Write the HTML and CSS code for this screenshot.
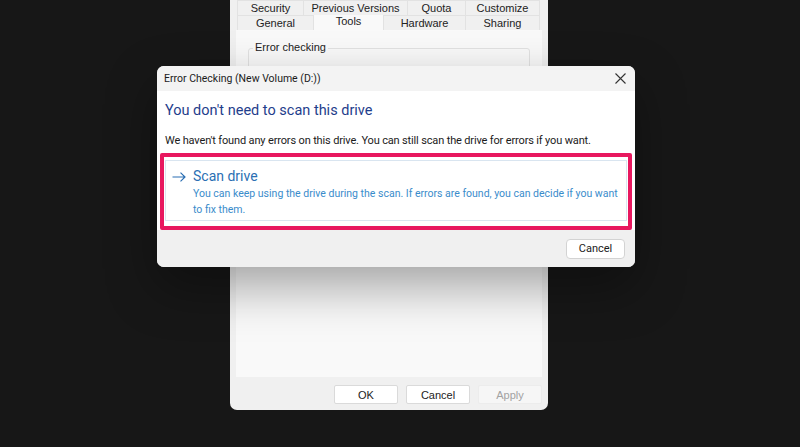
FILE: index.html
```html
<!DOCTYPE html>
<html lang="en">
<head>
    <meta charset="UTF-8">
    <meta name="viewport" content="width=device-width, initial-scale=1.0">
    <title>Error Checking</title>
    <link rel="stylesheet" href="styles.css">
</head>
<body>
    <div class="props">
        <div class="tab-row">
            <div class="tab" style="width: 66px">Security</div>
            <div class="tab" style="width: 104px">Previous Versions</div>
            <div class="tab" style="width: 58px">Quota</div>
            <div class="tab" style="width: 75px">Customize</div>
        </div>
        <div class="tab-row">
            <div class="tab" style="width: 76px">General</div>
            <div class="tab tab-active" style="width: 70px">Tools</div>
            <div class="tab" style="width: 82px">Hardware</div>
            <div class="tab" style="width: 75px">Sharing</div>
        </div>
        <div class="panel">
            <div class="group">
                <span class="group-label">Error checking</span>
            </div>
        </div>
        <div class="props-buttons">
            <button class="props-button">OK</button>
            <button class="props-button">Cancel</button>
            <button class="props-button props-button-disabled">Apply</button>
        </div>
    </div>

    <div class="dialog">
        <div class="dialog-title">
            <span>Error Checking (New Volume (D:))</span>
            <svg class="close" width="11" height="11" viewBox="0 0 11 11">
                <path d="M0.5 0.5 L10.5 10.5 M10.5 0.5 L0.5 10.5" stroke="#333" stroke-width="1.1" fill="none"/>
            </svg>
        </div>
        <div class="dialog-body">
            <h1>You don't need to scan this drive</h1>
            <p>We haven't found any errors on this drive. You can still scan the drive for errors if you want.</p>
            <div class="highlight">
                <div class="cmd-link">
                    <svg class="cmd-arrow" width="14" height="10" viewBox="0 0 14 10">
                        <path d="M0.5 5 H13 M8.5 0.6 L13 5 L8.5 9.4" stroke="#2b6fb3" stroke-width="1.2" fill="none"/>
                    </svg>
                    <div class="cmd-text">
                        <div class="cmd-title">Scan drive</div>
                        <div class="cmd-desc">You can keep using the drive during the scan. If errors are found, you can decide if you want to fix them.</div>
                    </div>
                </div>
            </div>
        </div>
        <div class="dialog-footer">
            <button class="dialog-button">Cancel</button>
        </div>
    </div>
</body>
</html>
```

FILE: styles.css
```css
html,
body {
    margin: 0;
    padding: 0;
    width: 800px;
    height: 447px;
    overflow: hidden;
    background: #171717;
}

body {
    font-family: "Liberation Sans", Arial, sans-serif;
    position: relative;
}

/* properties window behind */
.props {
    width: 306px;
    height: 410px;
    margin-left: 230px;
    padding: 0 6px;
    background: #f0f0f0;
    border-radius: 0 0 7px 7px;
    display: flex;
    flex-direction: column;
}

.tab-row {
    display: flex;
    margin-left: 1px;
    height: 15px;
}

.tab {
    box-sizing: border-box;
    font-size: 11px;
    color: #222222;
    text-align: center;
    line-height: 15px;
    border-left: 1px solid #e2e2e2;
    border-top: 1px solid #e2e2e2;
    background: #f0f0f0;
}

.tab:last-child {
    border-right: 1px solid #e2e2e2;
}

.tab-active {
    background: #f9f9f9;
    line-height: 12px;
    border-top: none;
}

.panel {
    height: 347px;
    background: #f9f9f9;
    box-sizing: border-box;
    padding: 18px 12px 0 12px;
}

.group {
    position: relative;
    height: 60px;
    border: 1px solid #e2e2e2;
    border-radius: 3px;
}

.group-label {
    position: absolute;
    top: -8px;
    left: 4px;
    padding: 0 2px;
    font-size: 11px;
    color: #222222;
    background: #f9f9f9;
}

.props-buttons {
    display: flex;
    justify-content: flex-end;
    gap: 8px;
    margin-top: 8px;
}

.props-button {
    width: 64px;
    height: 19px;
    padding: 0;
    font-family: "Liberation Sans", Arial, sans-serif;
    font-size: 11px;
    color: #222222;
    background: #ffffff;
    border: 1px solid #dadada;
    border-radius: 2px;
}

.props-button-disabled {
    background: #f6f6f6;
    color: #a2a2a2;
    border-color: #ececec;
}

/* error checking dialog on top */
.dialog {
    position: absolute;
    left: 157px;
    top: 66px;
    width: 478px;
    height: 201px;
    background: #ffffff;
    border-radius: 7px;
    overflow: hidden;
    font-family: Roboto, "Noto Sans", sans-serif;
    box-shadow: 0 20px 50px rgba(0, 0, 0, 0.35);
    display: flex;
    flex-direction: column;
}

.dialog-title {
    height: 25px;
    flex: none;
    background: #f3f3f3;
    display: flex;
    align-items: center;
    justify-content: space-between;
    padding: 0 9px 0 7px;
    font-size: 10.5px;
    color: #1b1b1b;
}

.close {
    display: block;
}

.dialog-body {
    padding: 0 3px 0 3px;
}

.dialog-body h1 {
    margin: 10px 0 0 5px;
    font-size: 14.5px;
    font-weight: 400;
    line-height: 20px;
    color: #1f3e8c;
}

.dialog-body p {
    margin: 12px 0 0 5px;
    font-size: 11px;
    letter-spacing: -0.15px;
    line-height: 15px;
    color: #1b1b1b;
}

.highlight {
    margin-top: 5px;
    border: 4px solid #e8185f;
    padding: 3px 1px 5px 1px;
    border-radius: 2px;
}

.cmd-link {
    display: flex;
    align-items: flex-start;
    border: 1px solid #d9e5f0;
    padding: 5px 6px 2px 5px;
}

.cmd-arrow {
    flex: none;
    margin: 6px 7px 0 1px;
}

.cmd-title {
    font-size: 14px;
    line-height: 20px;
    color: #2b6fb3;
}

.cmd-desc {
    font-size: 10.5px;
    line-height: 16px;
    color: #3a8ccb;
}

.dialog-footer {
    flex: 1;
    background: #f0f0f0;
    display: flex;
    justify-content: flex-end;
    align-items: center;
    padding-right: 10px;
}

.dialog-button {
    width: 59px;
    height: 20px;
    padding: 0;
    font-family: Roboto, "Noto Sans", sans-serif;
    font-size: 11px;
    color: #1b1b1b;
    background: #ffffff;
    border: 1px solid #d3d3d3;
    border-radius: 4px;
}
```
